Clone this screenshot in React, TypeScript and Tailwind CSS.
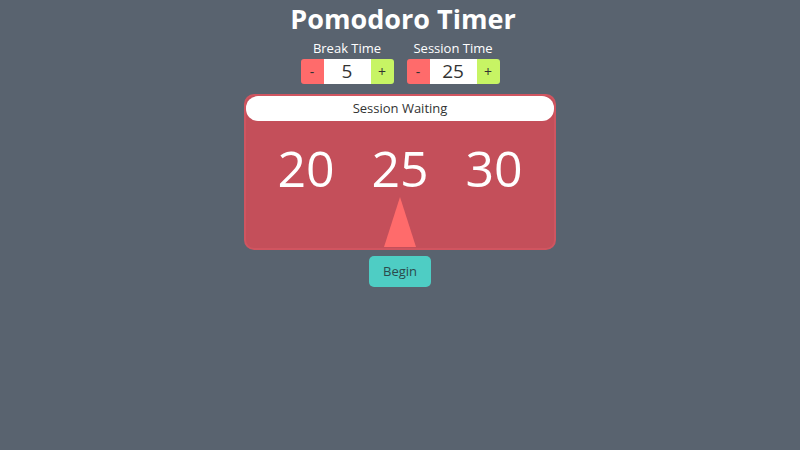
import React from 'react';

function Stepper({ label, value }: { label: string; value: number }) {
  return (
    <div className="flex flex-col items-center">
      <div className="text-[13px] leading-[18px] text-white">{label}</div>
      <div className="mt-[2px] flex h-[25px]">
        <button className="w-[23px] rounded-l-[3px] bg-[#ff6b6b] text-[14px] leading-[25px] text-[#333]">-</button>
        <div className="w-[47px] bg-white text-center text-[19px] leading-[25px] text-[#333]">{value}</div>
        <button className="w-[23px] rounded-r-[3px] bg-[#c7f464] text-[14px] leading-[25px] text-[#333]">+</button>
      </div>
    </div>
  );
}

export default function App() {
  return (
    <div className="flex h-[450px] w-[800px] flex-col items-center bg-[#59636f] font-['Open_Sans',sans-serif]">
      <h1 className="pl-[6px] text-[27px] font-bold leading-[37px] text-white">Pomodoro Timer</h1>
      <div className="mt-[2px] flex gap-[13px]">
        <Stepper label="Break Time" value={5} />
        <Stepper label="Session Time" value={25} />
      </div>
      <div className="mt-[10px] flex h-[156px] w-[312px] flex-col overflow-hidden rounded-[10px] border-2 border-[#d05560] bg-[#c44f5a]">
        <div className="h-[25px] rounded-[12px] bg-white text-center text-[13px] leading-[25px] text-[#333]">Session Waiting</div>
        <div className="mt-[19px] flex justify-center gap-[30px] text-[50px] leading-[56px] text-white">
          <span className="w-[64px] text-center">20</span>
          <span className="w-[64px] text-center">25</span>
          <span className="w-[64px] text-center">30</span>
        </div>
        <div className="mt-[1px] flex justify-center">
          <svg width="32" height="50" viewBox="0 0 32 50">
            <polygon points="16,0 32,50 0,50" fill="#ff6b6b" />
          </svg>
        </div>
      </div>
      <button className="mt-[6px] h-[31px] w-[62px] rounded-[5px] bg-[#4ecdc4] text-[13px] text-[#2b4a4c]">Begin</button>
    </div>
  );
}
